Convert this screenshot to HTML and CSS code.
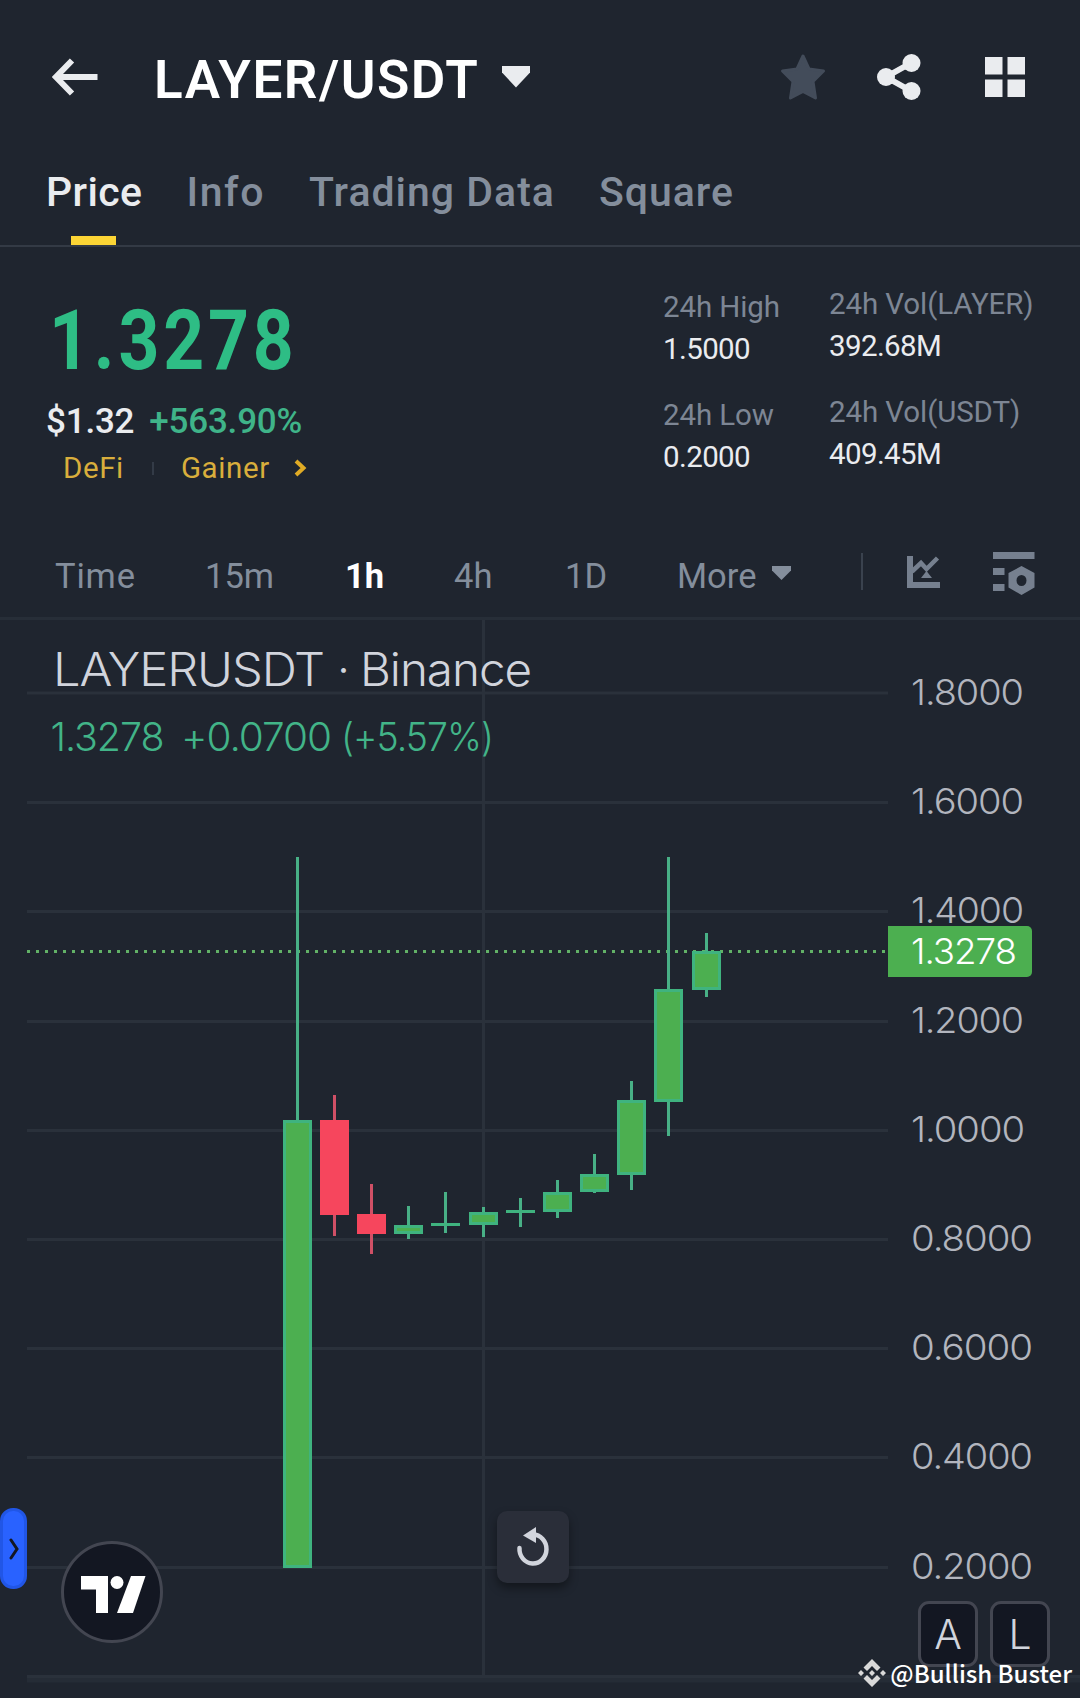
FILE: index.html
```html
<!DOCTYPE html>
<html lang="en">

<head>
    <meta charset="UTF-8">
    <meta name="viewport" content="width=device-width, initial-scale=1.0">
    <title>LAYER/USDT</title>
    <link rel="stylesheet" href="styles.css">
</head>

<body>

    <!-- Header -->
    <header class="header">
        <svg class="back" width="46" height="38" viewBox="0 0 46 38">
            <path d="M45.500 19H5M20 2.500L4 19l16 16.500" fill="none" stroke="#eaecef" stroke-width="6" />
        </svg>
        <h1>LAYER/USDT</h1>
        <svg class="caret" width="28" height="22" viewBox="0 0 28 22">
            <path d="M0 0h28v6.500L14 21.500 0 6.500z" fill="#eaecef" />
        </svg>
        <div class="header-icons">
            <svg width="46" height="48" viewBox="0 0 46 48">
                <path d="M23 3l6 13 14.500 2-10.500 10.500L35.500 45 23 38.500 10.500 45 13 28.500 2.500 18 17 16z" fill="#434c5a" stroke="#434c5a" stroke-width="3" stroke-linejoin="round" />
            </svg>
            <svg width="44" height="46" viewBox="0 0 44 46">
                <path d="M34 9L9 23l25 14" fill="none" stroke="#eaecef" stroke-width="6" />
                <circle cx="9" cy="23" r="9" fill="#eaecef" />
                <circle cx="34.500" cy="9" r="9" fill="#eaecef" />
                <circle cx="34.500" cy="37" r="9" fill="#eaecef" />
            </svg>
            <svg width="40" height="40" viewBox="0 0 40 40">
                <path d="M0 0h17.500v17.500H0zM22.500 0H40v17.500H22.500zM0 22.500h17.500V40H0zM22.500 22.500H40V40H22.500z" fill="#eaecef" />
            </svg>
        </div>
    </header>

    <nav class="tabs">
        <a class="tab active">Price</a>
        <a class="tab info">Info</a>
        <a class="tab">Trading Data</a>
        <a class="tab">Square</a>
    </nav>

    <!-- Ticker -->
    <section class="ticker">
        <div class="ticker-main">
            <div class="last-price">1.3278</div>
            <div class="change">
                <span class="usd">$1.32</span>
                <span class="percent">+563.90%</span>
            </div>
            <div class="tags">
                <span>DeFi</span>
                <i class="tag-divider"></i>
                <span>Gainer</span>
                <svg width="13" height="18" viewBox="0 0 13 18">
                    <path d="M2 2l7.500 7L2 16" fill="none" stroke="#e0ab25" stroke-width="4" />
                </svg>
            </div>
        </div>
        <div class="stats">
            <div class="stat"><span>24h High</span><b>1.5000</b></div>
            <div class="stat"><span>24h Low</span><b>0.2000</b></div>
        </div>
        <div class="stats volume">
            <div class="stat"><span>24h Vol(LAYER)</span><b>392.68M</b></div>
            <div class="stat"><span>24h Vol(USDT)</span><b>409.45M</b></div>
        </div>
    </section>

    <!-- Intervals -->
    <div class="intervals">
        <span class="time">Time</span>
        <span>15m</span>
        <span class="selected">1h</span>
        <span>4h</span>
        <span>1D</span>
        <span class="more">More
            <svg width="19" height="14" viewBox="0 0 19 14">
                <path d="M0 0h19v4.500L9.500 14 0 4.500z" fill="#848e9c" />
            </svg>
        </span>
        <i class="bar-divider"></i>
        <svg class="indicator" width="33" height="32" viewBox="0 0 33 32">
            <path d="M0 0h6v26h27v6H0z" fill="#76808f" />
            <path d="M5 15.500l9-8.500 5.500 6L30.500 2" fill="none" stroke="#76808f" stroke-width="4.500" />
            <path d="M14 22l5.500-7 5.500 7z" fill="#76808f" />
        </svg>
        <svg class="settings" width="42" height="43" viewBox="0 0 42 43">
            <path d="M0 0h41.500v7H0zM0 16h11.500v7H0zM0 32h11.500v7H0z" fill="#76808f" />
            <path fill-rule="evenodd" d="M28.500 14L41.500 21v14.500l-13 7.500-13-7.500V21zM28.500 23a5 5.500 0 1 0 0 11 5 5.500 0 1 0 0-11z" fill="#76808f" />
        </svg>
    </div>

    <!-- Chart -->
    <main class="chart">
        <svg class="plot" width="1080" height="1078" viewBox="0 620 1080 1078">
            <g class="grid">
                <path d="M27 693H888M27 802.500H888M27 911.500H888M27 1021.500H888M27 1130.500H888M27 1239.500H888M27 1348.500H888M27 1457.500H888M27 1567.500H888" />
                <path d="M483.500 620V1679" />
                <path class="axis-edge" d="M27 1680H1080" />
                <path d="M27 1676.500H1080" />
            </g>

            <path class="last-line" d="M27 951.500H888" />

            <g class="wick up">
                <path d="M297.500 857V1122M408.500 1206V1239M445.500 1192V1233M483.500 1207V1237M520.500 1198V1227M557.500 1180V1218M594.500 1154V1193M631.500 1081V1190M668.500 857V1136M706.500 933V997" />
            </g>
            <g class="wick down">
                <path d="M334.500 1095V1236M371.500 1184V1254" />
            </g>
            <g class="body up">
                <rect x="284.500" y="1121.500" width="26" height="445" />
                <rect x="395.500" y="1226.500" width="26" height="6" />
                <rect x="544.500" y="1193.500" width="26" height="17" />
                <rect x="470.500" y="1213.500" width="26" height="10" />
                <rect x="581.500" y="1175.500" width="26" height="15" />
                <rect x="618.500" y="1101.500" width="26" height="72" />
                <rect x="655.500" y="990.500" width="26" height="110" />
                <rect x="693.500" y="952.500" width="26" height="36" />
                <path d="M431 1224.500h29M506 1211.500h29" />
            </g>
            <g class="body down">
                <rect x="320" y="1120" width="29" height="95" />
                <rect x="357" y="1214" width="29" height="20" />
            </g>

            <g class="axis">
                <text x="911" y="704.500" textLength="112" lengthAdjust="spacingAndGlyphs">1.8000</text>
                <text x="911" y="814" textLength="112" lengthAdjust="spacingAndGlyphs">1.6000</text>
                <text x="911" y="923" textLength="112" lengthAdjust="spacingAndGlyphs">1.4000</text>
                <text x="911" y="1033" textLength="112" lengthAdjust="spacingAndGlyphs">1.2000</text>
                <text x="911" y="1142" textLength="113" lengthAdjust="spacingAndGlyphs">1.0000</text>
                <text x="911" y="1251" textLength="121" lengthAdjust="spacingAndGlyphs">0.8000</text>
                <text x="911" y="1360" textLength="121" lengthAdjust="spacingAndGlyphs">0.6000</text>
                <text x="911" y="1469" textLength="121" lengthAdjust="spacingAndGlyphs">0.4000</text>
                <text x="911" y="1579" textLength="121" lengthAdjust="spacingAndGlyphs">0.2000</text>
            </g>

            <path d="M888 926h139a5 5 0 0 1 5 5v41a5 5 0 0 1-5 5H888z" fill="#4caf50" />
            <text class="price-tag" x="911" y="964" textLength="105" lengthAdjust="spacingAndGlyphs">1.3278</text>

            <text class="symbol" x="53" y="686" textLength="271" lengthAdjust="spacingAndGlyphs">LAYERUSDT</text>
            <text class="symbol" x="337" y="686">·</text>
            <text class="symbol" x="360" y="686" textLength="171" lengthAdjust="spacingAndGlyphs">Binance</text>
            <text class="delta" x="50.500" y="751" textLength="113" lengthAdjust="spacingAndGlyphs">1.3278</text>
            <text class="delta" x="181" y="751" textLength="150" lengthAdjust="spacingAndGlyphs">+0.0700</text>
            <text class="delta" x="341" y="751" textLength="152" lengthAdjust="spacingAndGlyphs">(+5.57%)</text>
        </svg>

        <button class="drawer">
            <svg width="10" height="22" viewBox="0 0 10 22">
                <path d="M2 2l6 9-6 9" fill="none" stroke="#131722" stroke-width="3" stroke-linecap="round" />
            </svg>
        </button>

        <div class="tv-logo">
            <svg width="65" height="37" viewBox="0 0 65 37">
                <path d="M0 0h27v37H15V13.500H0z" fill="#fff" />
                <circle cx="36" cy="6.500" r="6.500" fill="#fff" />
                <path d="M50 0h14.500L52 37H36z" fill="#fff" />
            </svg>
        </div>

        <button class="reset">
            <svg width="34" height="40" viewBox="0 0 34 40">
                <path d="M3.500 21a13.500 14.500 0 1 0 13.500-13.500" fill="none" stroke="#d1d4dc" stroke-width="4.500" stroke-linecap="round" />
                <path d="M7 8.500L20 0v16z" fill="#d1d4dc" />
            </svg>
        </button>

        <div class="scale-buttons">
            <button>A</button>
            <button>L</button>
        </div>

        <div class="watermark">
            <svg width="28" height="28" viewBox="0 0 28 28">
                <path d="M14 0l8.500 8.500-3.500 3.500-5-5-5 5-3.500-3.500zM14 28l8.500-8.500L19 16l-5 5-5-5-3.500 3.500zM3 11l3 3-3 3-3-3zM25 11l3 3-3 3-3-3zM14 11l3 3-3 3-3-3z" fill="#d9d9d9" />
            </svg>
            <span>@Bullish Buster</span>
        </div>
    </main>

</body>

</html>
```
FILE: styles.css
```css
* {
    margin: 0;
    padding: 0;
    box-sizing: border-box;
}

body {
    width: 1080px;
    height: 1698px;
    overflow: hidden;
    font-family: Roboto, "Liberation Sans", sans-serif;
    background: #1f252f;
    color: #eaecef;
}

svg {
    display: block;
    flex: none;
}

button {
    border: none;
    font-family: inherit;
    color: inherit;
    cursor: pointer;
}

/* Header */
.header {
    display: flex;
    align-items: center;
    height: 154px;
    padding: 0 55px 0 52px;
}

.header h1 {
    margin: 5px 0 0 56px;
    font-size: 53px;
    font-weight: 600;
    line-height: 60px;
    letter-spacing: 1.5px;
    color: #fff;
}

.caret {
    margin-left: 23px;
}

.header-icons {
    display: flex;
    align-items: center;
    margin-left: auto;
}

.header-icons svg:nth-child(2) {
    margin: 0 64px 0 51px;
}

/* Tabs */
.tabs {
    display: flex;
    gap: 44px;
    height: 93px;
    padding-left: 46px;
    border-bottom: 2px solid #333a45;
}

.tab {
    position: relative;
    font-size: 41px;
    font-weight: 500;
    line-height: 76px;
    letter-spacing: 1px;
    color: #848e9c;
}

.tab.info {
    letter-spacing: 1.6px;
}

.tab.active {
    letter-spacing: 0.4px;
    color: #eaecef;
}

.tab.active::after {
    content: '';
    position: absolute;
    left: 25px;
    bottom: 0;
    width: 45px;
    height: 9px;
    background: #fcd535;
}

/* Ticker */
.ticker {
    display: flex;
    height: 287px;
}

.ticker-main {
    width: 663px;
    padding: 49px 0 0 46px;
}

.last-price {
    margin-left: 3px;
    font-size: 83px;
    font-weight: 700;
    line-height: 90px;
    letter-spacing: 4.5px;
    transform: scaleX(0.86);
    transform-origin: left;
    color: #2ebd85;
}

.change {
    display: flex;
    gap: 15px;
    margin-top: 14px;
    font-size: 35px;
    font-weight: 500;
    line-height: 44px;
    letter-spacing: -0.2px;
}

.percent {
    color: #3fb489;
}

.tags {
    display: flex;
    align-items: center;
    margin: 6px 0 0 17px;
    font-size: 29.5px;
    line-height: 36px;
    letter-spacing: 0.6px;
    color: #d9ae3c;
}

.tag-divider {
    width: 2px;
    height: 13px;
    margin: 0 27px 0 28px;
    background: #333b47;
}

.tags svg {
    margin-left: 24px;
}

.stats {
    width: 166px;
    padding-top: 39px;
}

.stats.volume {
    width: 240px;
    padding-top: 36px;
}

.stat {
    display: flex;
    flex-direction: column;
    margin-bottom: 24px;
    font-size: 29.5px;
    line-height: 42px;
    letter-spacing: -0.1px;
    white-space: nowrap;
    color: #7d8694;
}

.stat b {
    font-weight: 400;
    letter-spacing: -0.6px;
    color: #eaecef;
}

/* Intervals */
.intervals {
    display: grid;
    grid-template-columns: 150px 140px 109px 111px 112px 184px 46px 86px 42px;
    align-items: center;
    height: 86px;
    padding-left: 55px;
    border-bottom: 3px solid #272e38;
    font-size: 34.5px;
    color: #848e9c;
}

.intervals .time {
    letter-spacing: 0.8px;
}

.intervals .selected {
    font-weight: 700;
    color: #fff;
}

.more {
    display: flex;
    gap: 16px;
}

.more svg {
    margin-top: 10px;
}

.bar-divider {
    width: 2px;
    height: 37px;
    margin-top: -8px;
    background: #3a424e;
}

.indicator {
    margin-top: -7px;
}

.settings {
    margin-top: -5px;
}

/* Chart */
.chart {
    position: relative;
    height: 1078px;
    font-family: Inter, "Liberation Sans", sans-serif;
    font-weight: 300;
}

.grid path {
    fill: none;
    stroke: #2a313b;
    stroke-width: 3;
}

.grid .axis-edge {
    stroke: #252c36;
    stroke-width: 5;
}

.last-line {
    stroke: #62b267;
    stroke-width: 3;
    stroke-dasharray: 3 6;
}

.wick {
    stroke-width: 3;
}

.wick.up {
    stroke: #48b086;
}

.wick.down {
    stroke: #cf5066;
}

.body.up {
    fill: #4caf50;
    stroke: #3fb37f;
    stroke-width: 3;
}

.body.down {
    fill: #f6465d;
}

.axis,
.price-tag {
    font-size: 36px;
    letter-spacing: -1px;
    fill: #b2b5be;
}

.price-tag {
    fill: #fff;
}

.symbol {
    font-size: 46px;
    letter-spacing: -1px;
    fill: #d1d4dc;
}

.delta {
    font-size: 39px;
    letter-spacing: -1px;
    fill: #42b488;
}

.drawer {
    position: absolute;
    left: 0;
    top: 888px;
    display: flex;
    align-items: center;
    justify-content: center;
    width: 27px;
    height: 81px;
    border: 3px solid #2156e6;
    border-radius: 13px;
    background: #2962ff;
}

.tv-logo {
    position: absolute;
    left: 61px;
    top: 921px;
    display: flex;
    align-items: center;
    justify-content: center;
    width: 102px;
    height: 102px;
    padding: 4px 0 0 2px;
    border: 3px solid #434651;
    border-radius: 50%;
    background: #131722;
}

.reset {
    position: absolute;
    left: 497px;
    top: 891px;
    display: flex;
    align-items: center;
    justify-content: center;
    width: 72px;
    height: 72px;
    border-radius: 10px;
    background: #2a2e39;
    box-shadow: 0 5px 10px rgba(0, 0, 0, 0.4);
}

.scale-buttons {
    position: absolute;
    left: 918px;
    top: 981px;
    display: flex;
    gap: 12px;
}

.scale-buttons button {
    width: 60px;
    height: 66px;
    border: 3px solid #434651;
    border-radius: 11px;
    background: #131722;
    font-size: 41px;
    font-weight: 300;
    color: #d1d4dc;
}

.watermark {
    position: absolute;
    right: 8px;
    top: 1036px;
    display: flex;
    align-items: center;
    gap: 4px;
    font-family: "Noto Sans CJK SC", "Noto Sans", sans-serif;
    font-size: 24px;
    font-weight: 500;
    line-height: 34px;
    color: #fff;
}
```
